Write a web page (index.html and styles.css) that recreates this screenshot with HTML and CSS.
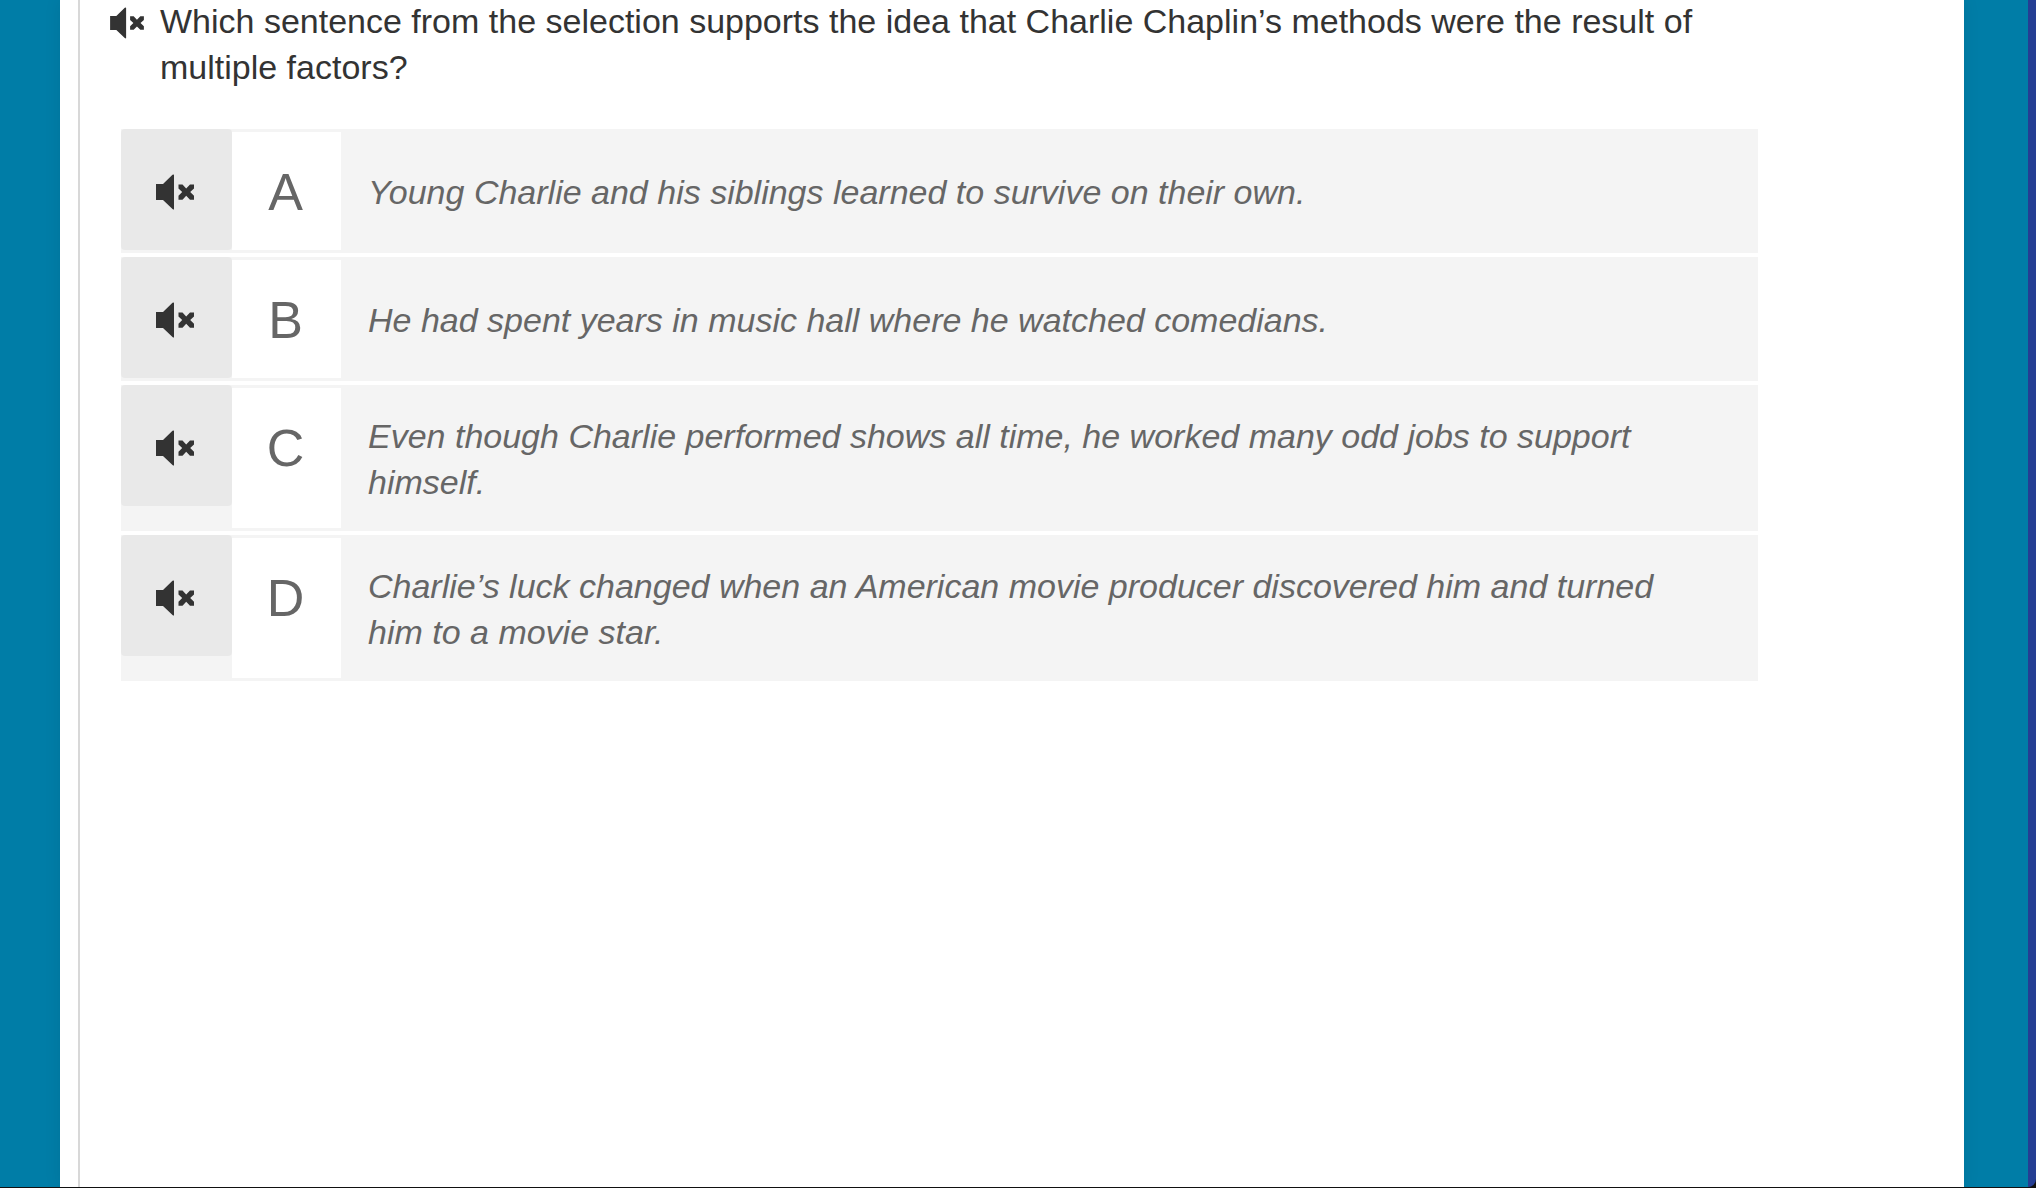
FILE: index.html
```
<!DOCTYPE html>
<html lang="en">
<head>
    <meta charset="UTF-8">
    <title>Reading Question</title>
    <link rel="stylesheet" href="styles.css">
</head>
<body>
    <!-- speaker icon, reused by every listen button -->
    <svg class="sprite" aria-hidden="true">
        <symbol id="muted" viewBox="0 0 38 36">
            <path d="M0 10h7L16.500.8Q18 0 18 1v34q0 1-1.500 0L7 26H0z"/>
            <path d="M22.500 10.500h4l3.700 3.900 3.800-3.900h4v4L34.200 18l3.800 3.700v4h-4l-3.800-3.900-3.700 3.900h-4v-4L26.200 18l-3.700-3.500z"/>
        </symbol>
    </svg>

    <main class="page">
        <form class="content">
            <div class="question">
                <button type="button" class="listen" aria-label="Listen to question"><svg><use href="#muted"/></svg></button>
                <p id="prompt">Which sentence from the selection supports the idea that Charlie Chaplin’s methods were the result of multiple factors?</p>
            </div>

            <div class="answers" role="radiogroup" aria-labelledby="prompt">
                <div class="answer">
                    <button type="button" class="listen-answer" aria-label="Listen to answer A"><svg><use href="#muted"/></svg></button>
                    <input type="radio" name="answer" id="a">
                    <label for="a"><span class="letter">A</span><span class="text">Young Charlie and his siblings learned to survive on their own.</span></label>
                </div>
                <div class="answer">
                    <button type="button" class="listen-answer" aria-label="Listen to answer B"><svg><use href="#muted"/></svg></button>
                    <input type="radio" name="answer" id="b">
                    <label for="b"><span class="letter">B</span><span class="text">He had spent years in music hall where he watched comedians.</span></label>
                </div>
                <div class="answer">
                    <button type="button" class="listen-answer" aria-label="Listen to answer C"><svg><use href="#muted"/></svg></button>
                    <input type="radio" name="answer" id="c">
                    <label for="c"><span class="letter">C</span><span class="text">Even though Charlie performed shows all time, he worked many odd jobs to support himself.</span></label>
                </div>
                <div class="answer">
                    <button type="button" class="listen-answer" aria-label="Listen to answer D"><svg><use href="#muted"/></svg></button>
                    <input type="radio" name="answer" id="d">
                    <label for="d"><span class="letter">D</span><span class="text">Charlie’s luck changed when an American movie producer discovered him and turned him to a movie star.</span></label>
                </div>
            </div>
        </form>
    </main>
</body>
</html>
```
FILE: styles.css
```
* {
    box-sizing: border-box;
}
html {
    background: #111;
}
body {
    margin: 0;
    min-height: 100vh;
    display: flex;
    border-bottom: 1px solid #111;
    font-family: "Liberation Sans", Arial, sans-serif;
    font-size: 34px;
    line-height: 46px;
    color: #333;
}
.sprite {
    display: none;
}
.page {
    flex: 1;
    display: flex;
    padding: 0 64px 0 60px;
    background: #007da7;
    border-right: 8px solid #253e93;
    border-bottom-right-radius: 8px;
}
.content {
    flex: 1;
    padding: 0 206px 0 18px;
    background: #fff;
    box-shadow: 0 0 16px rgba(0,0,0,0.08);
    position: relative;
}
.content::before {
    content: "";
    position: absolute;
    left: 18px;
    top: 0;
    bottom: 0;
    width: 2px;
    background: #d8d8d8;
}
button {
    border: none;
    padding: 0;
    background: none;
    cursor: pointer;
}
svg {
    display: block;
    fill: #333;
}
.question {
    display: flex;
    align-items: flex-start;
    padding-left: 32px;
}
.question p {
    margin: -2px 0 0;
}
.listen {
    flex: none;
    width: 50px;
    height: 46px;
}
.listen svg {
    width: 34px;
    height: 32px;
}
.answers {
    display: flex;
    flex-direction: column;
    gap: 4px;
    margin: 39px 0 0 43px;
}
.answer {
    display: flex;
    align-items: flex-start;
    min-height: 124px;
    background: #f4f4f4;
}
.answer input {
    appearance: none;
    width: 0;
    height: 0;
    margin: 0;
}
.listen-answer {
    flex: none;
    width: 111px;
    height: 121px;
    padding: 4px 0 0 35px;
    background: #e9e9e9;
    border-radius: 4px;
}
.listen-answer svg {
    width: 38px;
    height: 36px;
}
.answer label {
    flex: 1;
    align-self: stretch;
    display: flex;
    color: #666;
    cursor: pointer;
}
.letter {
    flex: none;
    width: 109px;
    margin: 3px 0;
    padding: 30px 2px 0 0;
    background: #fff;
    font-size: 52px;
    line-height: 60px;
    text-align: center;
}
.text {
    flex: 1;
    align-self: center;
    padding: 28px 60px 26px 27px;
    font-style: italic;
}
```
